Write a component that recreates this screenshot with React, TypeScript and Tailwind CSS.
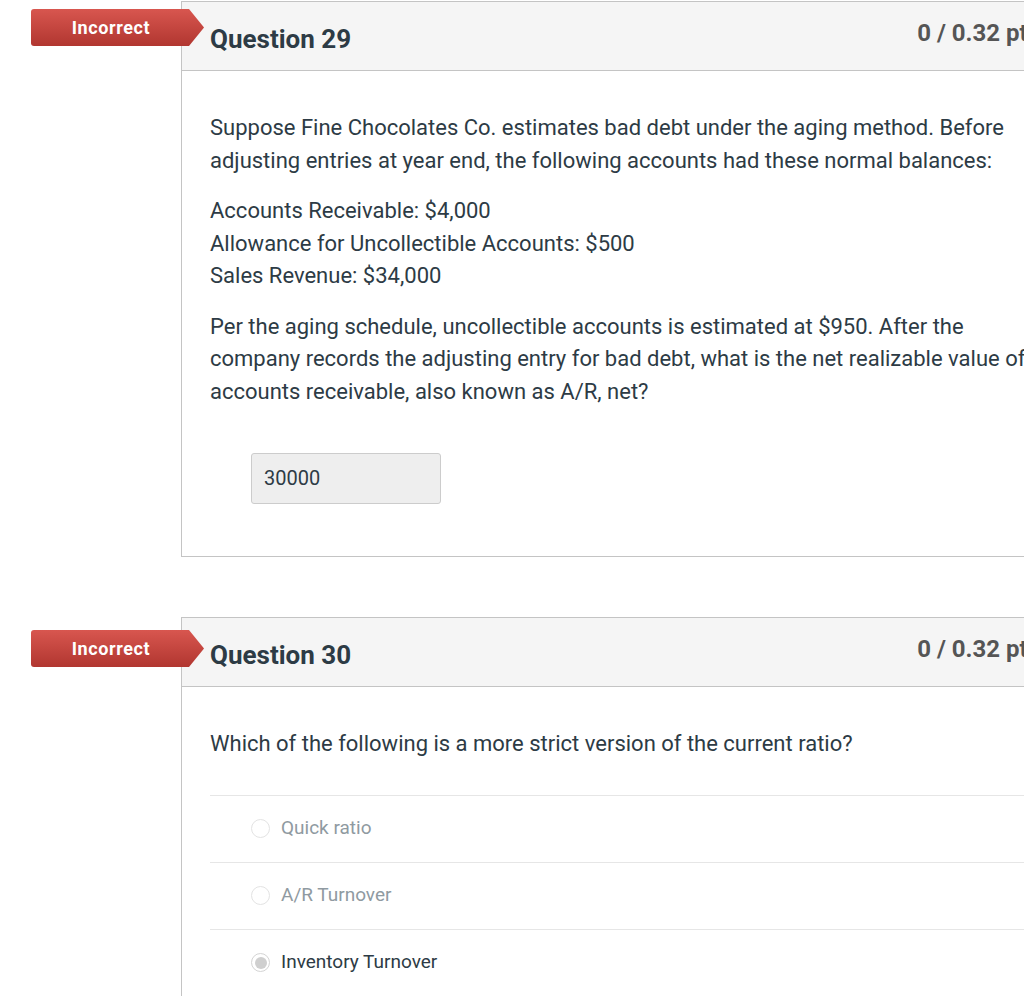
import React from "react";

type Option = { label: string; selected?: boolean };

function Badge({ top }: { top: string }) {
  return (
    <div
      className={`absolute left-[-151px] ${top} w-[173px] h-[37px] flex items-center rounded-l-[3px] bg-gradient-to-b from-[#d8564f] to-[#b13630] [clip-path:polygon(0_0,158px_0,173px_50%,158px_100%,0_100%)]`}
    >
      <span className="w-[160px] text-center text-white font-bold text-[18px] tracking-[0.6px] leading-none">
        Incorrect
      </span>
    </div>
  );
}

function Header({ title }: { title: string }) {
  return (
    <div className="h-[69px] flex items-start justify-between bg-[#f5f5f5] border-b border-[#c4c4c4] pl-[28px] pr-[38px]">
      <h2 className="mt-[22px] text-[26px] leading-[30px] font-bold text-[#2d3b45]">
        {title}
      </h2>
      <div className="mt-[16px] text-[24px] leading-[30px] font-bold text-[#555555]">
        0 / 0.32 pts
      </div>
    </div>
  );
}

function RadioRow({ label, selected }: Option) {
  return (
    <div className="h-[67px] flex items-center border-t border-[#e6e6e6] pl-[41px]">
      {selected ? (
        <span className="w-[19px] h-[19px] rounded-full border border-[#d4d4d4] bg-white flex items-center justify-center">
          <span className="w-[12px] h-[12px] rounded-full bg-[#cfcfcf]" />
        </span>
      ) : (
        <span className="w-[19px] h-[19px] rounded-full border border-[#e3e3e3] bg-white" />
      )}
      <span
        className={`ml-[11px] text-[19px] ${
          selected ? "text-[#2d3b45]" : "text-[#8f9aa1]"
        }`}
      >
        {label}
      </span>
    </div>
  );
}

export default function App() {
  const options: Option[] = [
    { label: "Quick ratio" },
    { label: "A/R Turnover" },
    { label: "Inventory Turnover", selected: true },
  ];

  return (
    <div className="w-[1024px] h-[999px] overflow-hidden bg-white font-['Roboto',sans-serif] text-[#2d3b45]">
      {/* QUESTION 29 */}

      <div className="relative ml-[181px] mt-[1px] w-[897px] border-t border-l border-b border-[#c4c4c4]">
        <Badge top="top-[7px]" />
        <Header title="Question 29" />

        <div className="pt-[41px] pb-[52px] pl-[28px] pr-[28px] text-[22px] leading-[32.5px]">
          <p>
            Suppose Fine Chocolates Co. estimates bad debt under the aging method. Before
            adjusting entries at year end, the following accounts had these normal balances:
          </p>

          <p className="mt-[18px]">
            Accounts Receivable: $4,000
            <br />
            Allowance for Uncollectible Accounts: $500
            <br />
            Sales Revenue: $34,000
          </p>

          <p className="mt-[18px]">
            Per the aging schedule, uncollectible accounts is estimated at $950. After the
            company records the adjusting entry for bad debt, what is the net realizable value of
            accounts receivable, also known as A/R, net?
          </p>

          <div className="mt-[45px] ml-[41px] w-[190px] h-[51px] flex items-center pl-[12px] bg-[#eeeeee] border border-[#cccccc] rounded-[3px] text-[20px] text-[#2d3b45]">
            30000
          </div>
        </div>
      </div>

      {/* QUESTION 30 */}

      <div className="relative ml-[181px] mt-[60px] w-[897px] border-t border-l border-[#c4c4c4]">
        <Badge top="top-[12px]" />
        <Header title="Question 30" />

        <div className="pt-[41px] pl-[28px] text-[22px] leading-[32.5px]">
          <p>Which of the following is a more strict version of the current ratio?</p>

          <div className="mt-[34px]">
            {options.map((o) => (
              <RadioRow key={o.label} label={o.label} selected={o.selected} />
            ))}
          </div>
        </div>
      </div>
    </div>
  );
}
